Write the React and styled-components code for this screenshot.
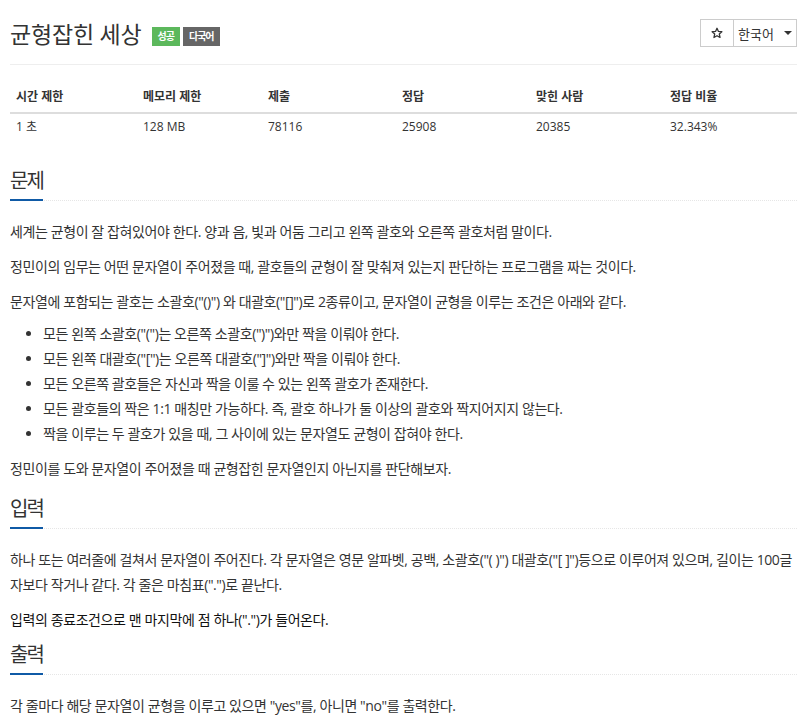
import React from 'react';
import styled, { createGlobalStyle } from 'styled-components';

const GlobalStyle = createGlobalStyle`
body {
  margin: 0;
  background: #fff;
  color: #333;
  font-family: "Open Sans", "Noto Sans CJK KR", sans-serif;
}
`

const stats = [
    { label: '시간 제한', value: '1 초' },
    { label: '메모리 제한', value: '128 MB' },
    { label: '제출', value: '78116' },
    { label: '정답', value: '25908' },
    { label: '맞힌 사람', value: '20385' },
    { label: '정답 비율', value: '32.343%' },
];

const rules = [
    '모든 왼쪽 소괄호("(")는 오른쪽 소괄호(")")와만 짝을 이뤄야 한다.',
    '모든 왼쪽 대괄호("[")는 오른쪽 대괄호("]")와만 짝을 이뤄야 한다.',
    '모든 오른쪽 괄호들은 자신과 짝을 이룰 수 있는 왼쪽 괄호가 존재한다.',
    '모든 괄호들의 짝은 1:1 매칭만 가능하다. 즉, 괄호 하나가 둘 이상의 괄호와 짝지어지지 않는다.',
    '짝을 이루는 두 괄호가 있을 때, 그 사이에 있는 문자열도 균형이 잡혀야 한다.',
];

const StarIcon = () => (
    <svg width="12" height="12" viewBox="0 0 24 24" fill="none" stroke="#333" strokeWidth="2.6" strokeLinejoin="round">
        <path d="M12 2.5l2.9 6.3 6.8.7-5.1 4.6 1.5 6.8L12 17.4l-6.1 3.5 1.5-6.8-5.1-4.6 6.8-.7z" />
    </svg>
);

const App = () => {
    return (
        <Page>
            <GlobalStyle />
            <Header>
                <Title>
                    균형잡힌 세상
                    <Badge $color="#5cb85c">성공</Badge>
                    <Badge $color="#666">다국어</Badge>
                </Title>
                <ButtonGroup>
                    <GroupButton $w={33}><StarIcon /></GroupButton>
                    <GroupButton $w={63}>
                        한국어 <Caret />
                    </GroupButton>
                </ButtonGroup>
            </Header>
            <Divider />
            <StatTable>
                {stats.map(s => <HeadCell key={s.label}>{s.label}</HeadCell>)}
                {stats.map(s => <DataCell key={s.label}>{s.value}</DataCell>)}
            </StatTable>

            <Section>
                <Headline><h2>문제</h2></Headline>
                <Body>
                    <p>세계는 균형이 잘 잡혀있어야 한다. 양과 음, 빛과 어둠 그리고 왼쪽 괄호와 오른쪽 괄호처럼 말이다.</p>
                    <p>정민이의 임무는 어떤 문자열이 주어졌을 때, 괄호들의 균형이 잘 맞춰져 있는지 판단하는 프로그램을 짜는 것이다.</p>
                    <p>문자열에 포함되는 괄호는 소괄호("()") 와 대괄호("[]")로 2종류이고, 문자열이 균형을 이루는 조건은 아래와 같다.</p>
                    <RuleList>
                        {rules.map(r => <li key={r}>{r}</li>)}
                    </RuleList>
                    <p>정민이를 도와 문자열이 주어졌을 때 균형잡힌 문자열인지 아닌지를 판단해보자.</p>
                </Body>
            </Section>

            <Section $top={15}>
                <Headline><h2>입력</h2></Headline>
                <Body>
                    <p>하나 또는 여러줄에 걸쳐서 문자열이 주어진다. 각 문자열은 영문 알파벳, 공백, 소괄호("( )") 대괄호("[ ]")등으로 이루어져 있으며, 길이는 100글자보다 작거나 같다. 각 줄은 마침표(".")로 끝난다.</p>
                    <Strong>입력의 종료조건으로 맨 마지막에 점 하나(".")가 들어온다.</Strong>
                </Body>
            </Section>

            <Section>
                <Headline><h2>출력</h2></Headline>
                <Body>
                    <p>각 줄마다 해당 문자열이 균형을 이루고 있으면 "yes"를, 아니면 "no"를 출력한다.</p>
                </Body>
            </Section>
        </Page>
    );
}

const Page = styled.div`
padding: 0 3px 0 10px;
width: 787px;
`
const Header = styled.div`
display: flex;
align-items: center;
justify-content: space-between;
padding-top: 19px;
height: 28px;
`
const Title = styled.div`
display: flex;
align-items: center;
font-size: 23px;
letter-spacing: -0.2px;
line-height: 28px;
color: #333;
padding-top: 1px;
`
const Badge = styled.span`
display: inline-flex;
align-items: center;
justify-content: center;
height: 19px;
padding: 0 6px;
margin-left: 3px;
background: ${p => p.$color};
color: #fff;
font-size: 10px;
font-weight: bold;
letter-spacing: -1px;
margin-top: 5px;
&:first-of-type { margin-left: 10px; }
`
const ButtonGroup = styled.div`
display: flex;
border: 1px solid #ccc;
height: 26px;
`
const GroupButton = styled.div`
display: flex;
align-items: center;
justify-content: center;
gap: 8px;
width: ${p => p.$w - 1}px;
font-size: 13px;
& + & { border-left: 1px solid #ccc; }
`
const Caret = styled.span`
width: 0;
height: 0;
border-left: 4px solid transparent;
border-right: 4px solid transparent;
border-top: 4px solid #333;
margin-left: 2px;
`
const Divider = styled.div`
border-top: 1px solid #eee;
margin: 17px 0 18px;
`
const StatTable = styled.div`
display: grid;
grid-template-columns: 127px 125px 134px 134px 134px 1fr;
font-size: 12px;
line-height: 18.6px;
margin-bottom: 27px;
`
const HeadCell = styled.div`
padding: 5px 6px 5px 6px;
font-weight: bold;
border-bottom: 2px solid #ddd;
`
const DataCell = styled.div`
padding: 4px 6px 5px 6px;
`
const Section = styled.section`
margin-top: ${p => p.$top || 0}px;
`
const Headline = styled.div`
border-bottom: 1px dotted #e6e6e6;
margin-bottom: 18px;
h2 {
  display: inline-block;
  white-space: nowrap;
  margin: 0 0 -1px;
  font-size: 20px;
  font-weight: normal;
  line-height: 26px;
  padding: 0 0 5px;
  border-bottom: 2px solid #0f5aa6;
  letter-spacing: -2px;
}
`
const Body = styled.div`
font-size: 14px;
line-height: 25px;
letter-spacing: -0.4px;
p { margin: 0 0 10px; }
`
const RuleList = styled.ul`
margin: -3px 0 10px;
padding-left: 33px;
li { line-height: 25px; }
`
const Strong = styled.p`
color: #111;
`

export default App;
